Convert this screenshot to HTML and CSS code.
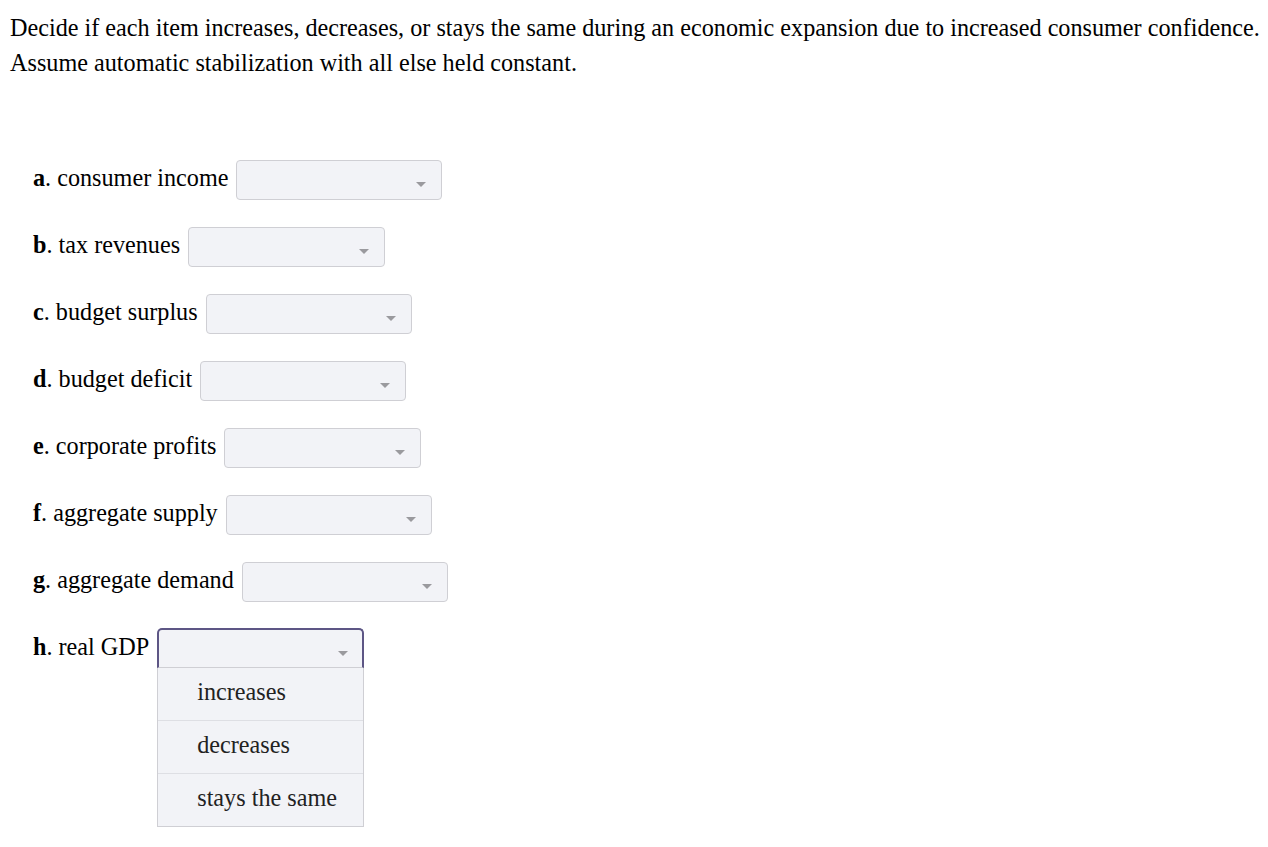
FILE: index.html
```html
<!DOCTYPE html>
<html>
<head>
<meta charset="utf-8">
<link rel="stylesheet" href="styles.css">
</head>
<body>
<div class="prompt">
  <p>Decide if each item increases, decreases, or stays the same during an economic expansion due to increased consumer confidence.</p>
  <p>Assume automatic stabilization with all else held constant.</p>
</div>
<div class="items">
  <div class="row"><span class="label"><b>a</b>. consumer income</span><span class="select"><span class="arrow"></span></span></div>
  <div class="row"><span class="label"><b>b</b>. tax revenues</span><span class="select narrow"><span class="arrow"></span></span></div>
  <div class="row"><span class="label"><b>c</b>. budget surplus</span><span class="select"><span class="arrow"></span></span></div>
  <div class="row"><span class="label"><b>d</b>. budget deficit</span><span class="select"><span class="arrow"></span></span></div>
  <div class="row"><span class="label"><b>e</b>. corporate profits</span><span class="select narrow"><span class="arrow"></span></span></div>
  <div class="row"><span class="label"><b>f</b>. aggregate supply</span><span class="select"><span class="arrow"></span></span></div>
  <div class="row"><span class="label"><b>g</b>. aggregate demand</span><span class="select"><span class="arrow"></span></span></div>
  <div class="row last"><span class="label"><b>h</b>. real GDP</span><span class="select open"><span class="arrow"></span>
    <span class="menu">
      <span class="option">increases</span>
      <span class="option">decreases</span>
      <span class="option">stays the same</span>
    </span>
  </span></div>
</div>
</body>
</html>
```

FILE: styles.css
```css
html, body {
  margin: 0;
  padding: 0;
  background: #fff;
}
body {
  min-height: 847px;
  font-family: "Liberation Serif", "Times New Roman", serif;
  font-size: 24.2px;
  color: #000;
}
.prompt {
  padding: 10px 0 0 10px;
}
.prompt p {
  margin: 0;
  line-height: 35px;
}
.items {
  padding: 80px 0 220px 33px;
  display: flex;
  flex-direction: column;
  gap: 27px;
}
.row {
  display: flex;
  align-items: flex-start;
  height: 40px;
}
.row.last {
  margin-top: -1px;
}
.label {
  line-height: 36px;
  margin-right: 8px;
  white-space: nowrap;
}
.row.last .label {
  line-height: 38px;
}
.select {
  position: relative;
  box-sizing: border-box;
  width: 206px;
  height: 40px;
  border: 1px solid #cfcfd4;
  border-radius: 4px;
  background: #f2f3f7;
}
.select.narrow {
  width: 197px;
}
.arrow {
  position: absolute;
  right: 15px;
  top: 21px;
  width: 0;
  height: 0;
  border-left: 5px solid transparent;
  border-right: 5px solid transparent;
  border-top: 5px solid #9a9a9e;
}
.select.open {
  width: 207px;
  border: 2px solid #5d5685;
  border-bottom: 1px solid #cfcfd4;
  border-radius: 5px 5px 0 0;
}
.select.open .arrow {
  right: 14px;
  top: 21px;
}
.menu {
  position: absolute;
  left: -2px;
  right: -2px;
  top: 38px;
  display: flex;
  flex-direction: column;
  background: #f2f3f7;
  border: 1px solid #cfcfd4;
  border-top: none;
  z-index: 2;
}
.option {
  height: 52px;
  line-height: 47px;
  padding-left: 39px;
  color: #222;
  border-bottom: 1px solid #dedfe4;
}
.option:last-child {
  border-bottom: none;
}
```
